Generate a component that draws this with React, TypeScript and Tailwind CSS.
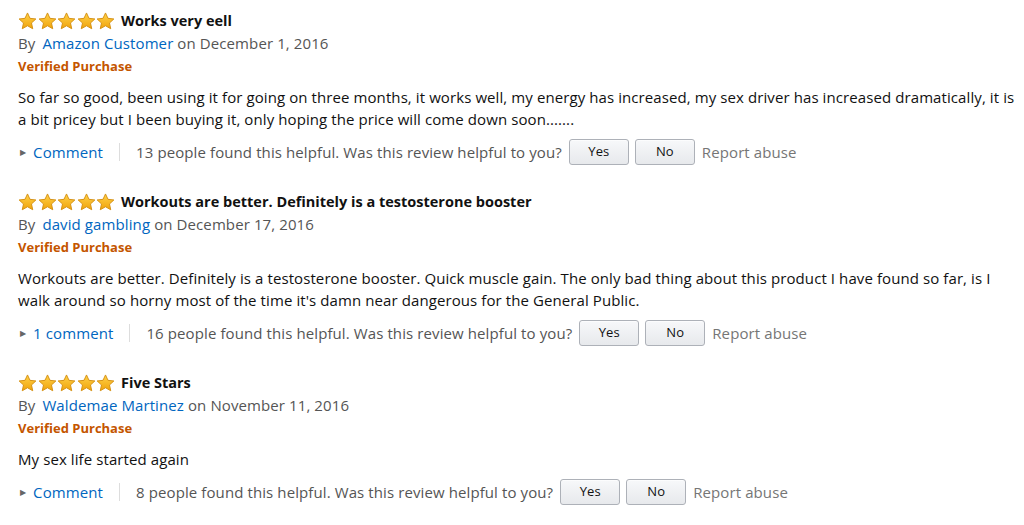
import React from "react";

type Review = {
  title: string;
  author: string;
  date: string;
  body: string;
  comments: string;
  helpful: number;
};

const reviews: Review[] = [
  {
    title: "Works very eell",
    author: "Amazon Customer",
    date: "December 1, 2016",
    body: "So far so good, been using it for going on three months, it works well, my energy has increased, my sex driver has increased dramatically, it is a bit pricey but I been buying it, only hoping the price will come down soon.......",
    comments: "Comment",
    helpful: 13,
  },
  {
    title: "Workouts are better. Definitely is a testosterone booster",
    author: "david gambling",
    date: "December 17, 2016",
    body: "Workouts are better. Definitely is a testosterone booster. Quick muscle gain. The only bad thing about this product I have found so far, is I walk around so horny most of the time it's damn near dangerous for the General Public.",
    comments: "1 comment",
    helpful: 16,
  },
  {
    title: "Five Stars",
    author: "Waldemae Martinez",
    date: "November 11, 2016",
    body: "My sex life started again",
    comments: "Comment",
    helpful: 8,
  },
];

const Star = () => (
  <svg width="19" height="18" viewBox="0 0 24 23" className="block">
    <defs>
      <linearGradient id="sg" x1="0" y1="0" x2="0" y2="1">
        <stop offset="0" stopColor="#ffd24a" />
        <stop offset="1" stopColor="#f0a30a" />
      </linearGradient>
    </defs>
    <path
      d="M12 1.2l3.2 6.9 7.5.8-5.6 5.1 1.6 7.4L12 17.6l-6.7 3.8 1.6-7.4L1.3 8.9l7.5-.8z"
      fill="url(#sg)"
      stroke="#d38f12"
      strokeWidth="1.2"
      strokeLinejoin="round"
    />
  </svg>
);

const VoteButton = ({ label }: { label: string }) => (
  <button className="h-[26px] w-[60px] rounded-[3px] border border-[#adb1b8] bg-gradient-to-b from-[#f7f8fa] to-[#e7e9ec] text-[13px] text-[#111] shadow-[0_1px_0_rgba(255,255,255,0.6)_inset]">
    {label}
  </button>
);

const ReviewItem = ({ r }: { r: Review }) => (
  <div className="mb-6">
    <div className="flex items-center leading-[23px]">
      <div className="flex gap-[0.5px]">
        {[0, 1, 2, 3, 4].map((i) => (
          <Star key={i} />
        ))}
      </div>
      <span className="ml-[6px] text-[14.5px] font-bold text-[#111]">{r.title}</span>
    </div>
    <div className="text-[15px] leading-[23px] tracking-[0.1px] text-[#555]">
      By <a className="ml-[3px] text-[#0066c0]">{r.author}</a> on {r.date}
    </div>
    <div className="text-[13px] font-bold leading-[23px] text-[#c45500]">Verified Purchase</div>
    <p className="mt-2 text-[15px] leading-[22px] tracking-[0.09px] text-[#111]">{r.body}</p>
    <div className="mt-2 flex h-[28px] items-center text-[15px] tracking-[0.1px] text-[#555]">
      <span className="ml-[2px] mr-[7px] text-[8px] text-[#666]">▶</span>
      <a className="text-[#0066c0]">{r.comments}</a>
      <span className="mx-4 h-[18px] border-l border-[#ddd]" />
      <span>{r.helpful} people found this helpful. Was this review helpful to you?</span>
      <div className="ml-[7px] flex gap-[6px]">
        <VoteButton label="Yes" />
        <VoteButton label="No" />
      </div>
      <a className="ml-[7px] text-[#767676]">Report abuse</a>
    </div>
  </div>
);

export default function App() {
  return (
    <div className="min-h-[525px] bg-white pl-[18px] pr-[5px] pt-[9px] font-['Open_Sans',sans-serif]">
      {reviews.map((r) => (
        <ReviewItem key={r.title} r={r} />
      ))}
    </div>
  );
}
